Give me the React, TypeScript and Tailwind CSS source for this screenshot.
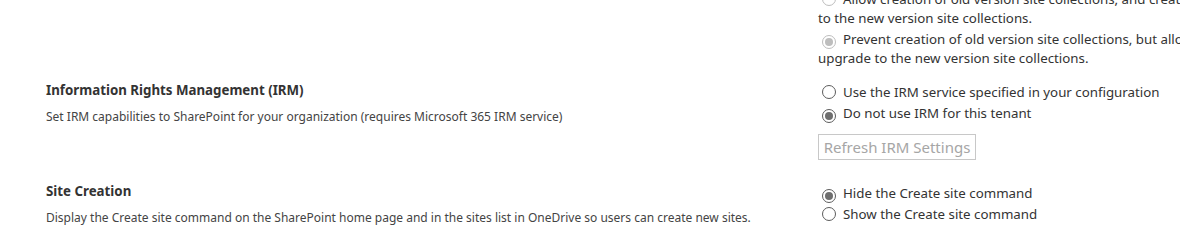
import type { ReactNode } from 'react';

type RadioProps = {
	checked?: boolean;
	disabled?: boolean;
};

function Radio({ checked, disabled }: RadioProps) {
	return (
		<span
			className={
				'inline-flex items-center justify-center align-[-2px] w-[14px] h-[14px] rounded-full border bg-white ml-[4px] mr-[7px] ' +
				(disabled ? 'border-[#bdbdbd]' : 'border-[#5c5c5c]')
			}
		>
			{checked && (
				<span
					className={
						'w-[8px] h-[8px] rounded-full ' +
						(disabled ? 'bg-[#bdbdbd]' : 'bg-[#6e6e6e]')
					}
				/>
			)}
		</span>
	);
}

function Option({
	checked,
	disabled,
	children,
}: RadioProps & { children: ReactNode }) {
	return (
		<div className="text-[13.3px] leading-[19px] text-[#333] whitespace-nowrap">
			<Radio checked={checked} disabled={disabled} />
			{children}
		</div>
	);
}

function Section({
	title,
	description,
	children,
}: {
	title: string;
	description: string;
	children: ReactNode;
}) {
	return (
		<div className="flex">
			<div className="w-[818px] shrink-0 pl-[46px]">
				<div className="text-[13.3px] leading-[16px] font-bold text-[#333]">
					{title}
				</div>
				<div className="mt-[11px] text-[12px] leading-[16px] text-[#444]">
					{description}
				</div>
			</div>
			<div className="w-[400px] shrink-0 pt-[1px] flex flex-col gap-[2px]">
				{children}
			</div>
		</div>
	);
}

export default function App() {
	return (
		<div
			className="w-[1180px] h-[245px] overflow-hidden bg-white"
			style={{ fontFamily: '"Noto Sans", "Open Sans", sans-serif' }}
		>
			<div className="-mt-[10px] flex">
				<div className="w-[818px] shrink-0" />
				<div className="w-[400px] shrink-0 flex flex-col gap-[2px]">
					<Option disabled>
						Allow creation of old version site collections, and create upgrades
						<br />
						to the new version site collections.
					</Option>
					<Option checked disabled>
						Prevent creation of old version site collections, but allow
						<br />
						upgrade to the new version site collections.
					</Option>
				</div>
			</div>

			<div className="mt-[14px]">
				<Section
					title="Information Rights Management (IRM)"
					description="Set IRM capabilities to SharePoint for your organization (requires Microsoft 365 IRM service)"
				>
					<Option>Use the IRM service specified in your configuration</Option>
					<Option checked>Do not use IRM for this tenant</Option>
					<div className="mt-[9px]">
						<button
							type="button"
							disabled
							className="h-[26px] w-[158px] border border-[#c8c8c8] bg-white text-[15px] text-[#a6a6a6] leading-[24px]"
						>
							Refresh IRM Settings
						</button>
					</div>
				</Section>
			</div>

			<div className="mt-[23px]">
				<Section
					title="Site Creation"
					description="Display the Create site command on the SharePoint home page and in the sites list in OneDrive so users can create new sites."
				>
					<Option checked>Hide the Create site command</Option>
					<Option>Show the Create site command</Option>
				</Section>
			</div>
		</div>
	);
}
